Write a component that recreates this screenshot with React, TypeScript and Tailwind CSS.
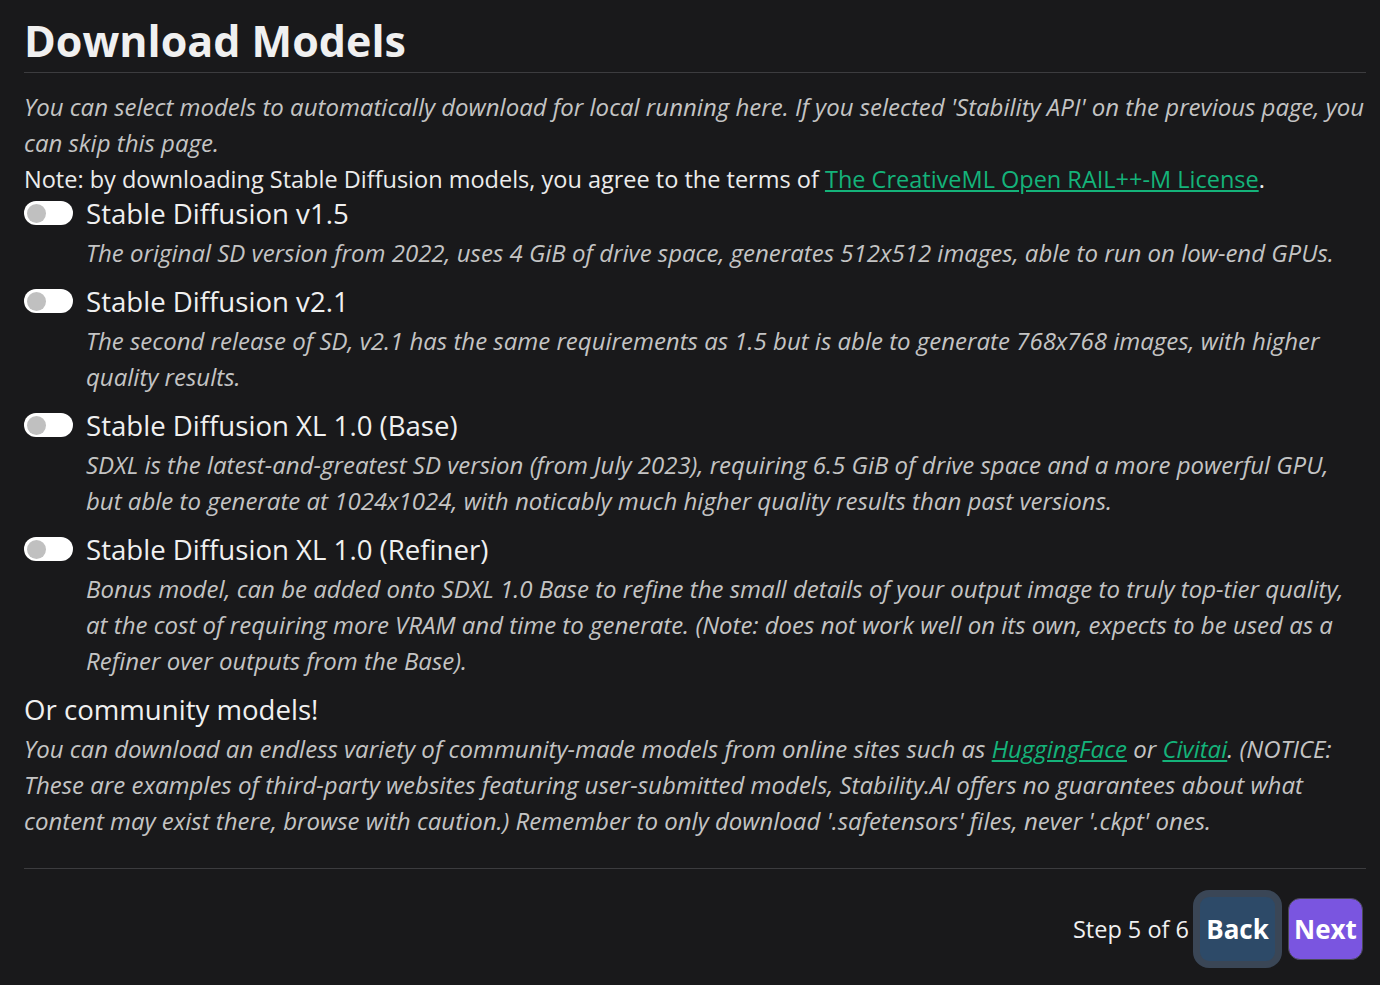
import { useState } from "react";

const models = [
  {
    name: "Stable Diffusion v1.5",
    desc: "The original SD version from 2022, uses 4 GiB of drive space, generates 512x512 images, able to run on low-end GPUs.",
  },
  {
    name: "Stable Diffusion v2.1",
    desc: "The second release of SD, v2.1 has the same requirements as 1.5 but is able to generate 768x768 images, with higher quality results.",
  },
  {
    name: "Stable Diffusion XL 1.0 (Base)",
    desc: "SDXL is the latest-and-greatest SD version (from July 2023), requiring 6.5 GiB of drive space and a more powerful GPU, but able to generate at 1024x1024, with noticably much higher quality results than past versions.",
  },
  {
    name: "Stable Diffusion XL 1.0 (Refiner)",
    desc: "Bonus model, can be added onto SDXL 1.0 Base to refine the small details of your output image to truly top-tier quality, at the cost of requiring more VRAM and time to generate. (Note: does not work well on its own, expects to be used as a Refiner over outputs from the Base).",
  },
];

function Toggle() {
  const [on, setOn] = useState(false);
  return (
    <button
      onClick={() => setOn(!on)}
      className={`flex h-[24px] w-[49px] shrink-0 items-center rounded-full px-[3px] ${on ? "justify-end bg-[#7a55e0]" : "justify-start bg-white"}`}
    >
      <span className="h-[19px] w-[19px] rounded-full bg-[#c0c0c0]" />
    </button>
  );
}

export default function App() {
  return (
    <div className="min-h-[985px] bg-[#19191b] pl-[24px] pr-[14px] text-[#ececec] font-['Open_Sans',sans-serif]">
      <h1 className="border-b border-[#3c3c3f] pt-[15px] pb-[5px] text-[43px] font-bold leading-[52px] text-[#f0f0f0]">
        Download Models
      </h1>

      <p className="mt-[16px] text-[24px] italic leading-[36px] text-[#c4c4c4]">
        You can select models to automatically download for local running here. If you selected 'Stability API' on the
        previous page, you can skip this page.
      </p>
      <p className="text-[23.5px] leading-[36px]">
        Note: by downloading Stable Diffusion models, you agree to the terms of{" "}
        <a href="#" className="text-[#14b37a] underline">
          The CreativeML Open RAIL++-M License
        </a>
        .
      </p>

      {models.map((m) => (
        <div key={m.name} className="mb-[14px]">
          <div className="flex items-center gap-[13px]">
            <Toggle />
            <span className="text-[27.6px] leading-[32px] text-[#f0f0f0]">{m.name}</span>
          </div>
          <p className="mt-[6px] pl-[62px] text-[24px] italic leading-[36px] text-[#c4c4c4]">{m.desc}</p>
        </div>
      ))}

      <h2 className="text-[27.6px] leading-[32px] text-[#f0f0f0]">Or community models!</h2>
      <p className="mt-[6px] text-[24px] italic leading-[36px] text-[#c4c4c4]">
        You can download an endless variety of community-made models from online sites such as{" "}
        <a href="#" className="text-[#14b37a] underline">
          HuggingFace
        </a>{" "}
        or{" "}
        <a href="#" className="text-[#14b37a] underline">
          Civitai
        </a>
        . (NOTICE: These are examples of third-party websites featuring user-submitted models, Stability.AI offers no
        guarantees about what content may exist there, browse with caution.) Remember to only download '.safetensors'
        files, never '.ckpt' ones.
      </p>

      <div className="mt-[29px] border-t border-[#3c3c3f]" />

      <div className="flex items-center justify-end gap-[3px] pt-[21px] pr-[3px]">
        <span className="mr-[1px] text-[23.5px] leading-[36px] text-[#f0f0f0]">Step 5 of 6</span>
        <button className="h-[78px] w-[89px] rounded-[16px] border-[7px] border-[#3a4656] bg-[#2d4a68] text-[26px] font-bold text-white">
          Back
        </button>
        <button className="ml-[3px] h-[62px] w-[75px] rounded-[12px] border border-[#4a4a55] bg-[#7a55e0] text-[26px] font-bold text-white">
          Next
        </button>
      </div>
    </div>
  );
}
